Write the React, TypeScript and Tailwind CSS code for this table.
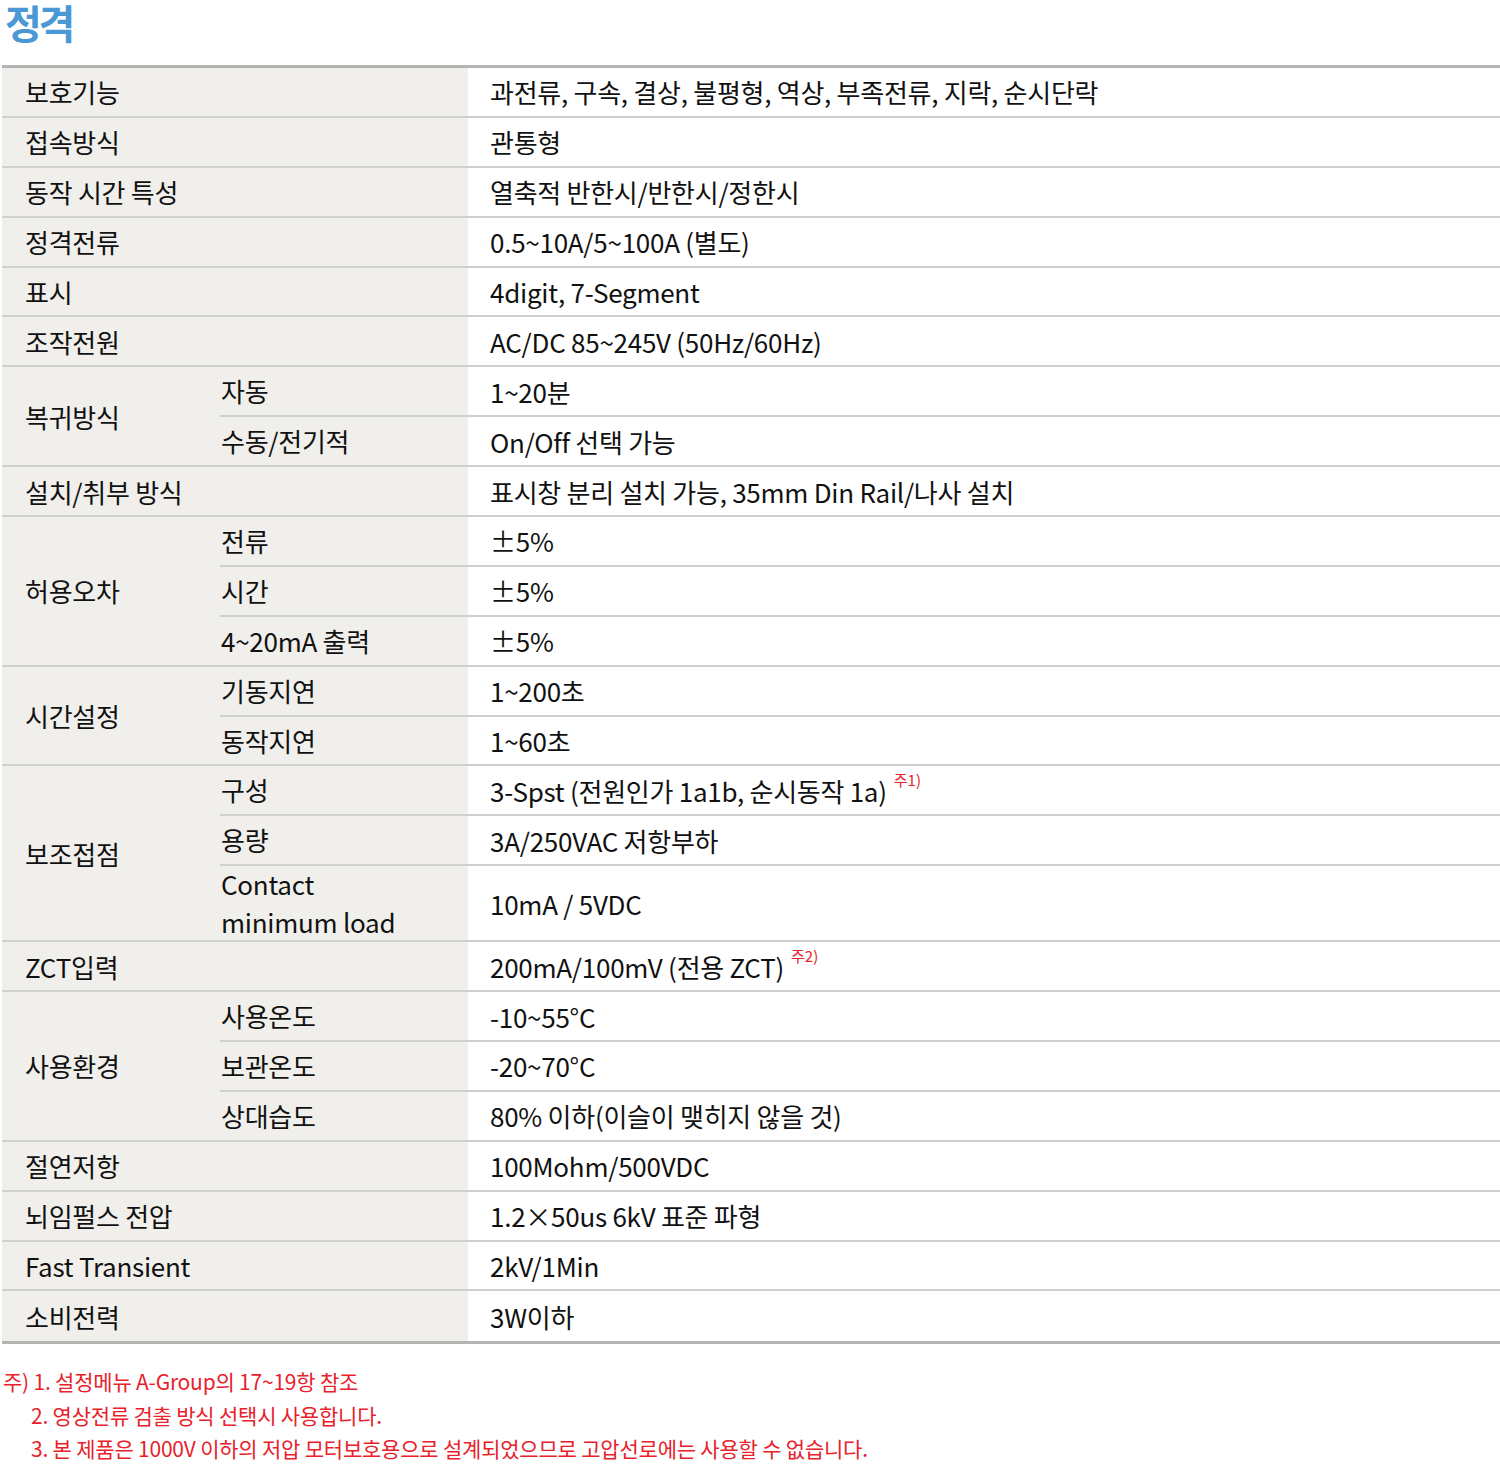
import React from "react"

type Sub = { label: React.ReactNode; value: React.ReactNode; tall?: boolean }
type Row = { label: string; value?: React.ReactNode; subs?: Sub[] }

const Note = ({ n }: { n: string }) => (
  <sup className="relative -top-[10px] ml-[7px] align-top text-[15px] tracking-normal text-[#e8212b]">주{n})</sup>
)

const rows: Row[] = [
  { label: "보호기능", value: "과전류, 구속, 결상, 불평형, 역상, 부족전류, 지락, 순시단락" },
  { label: "접속방식", value: "관통형" },
  { label: "동작 시간 특성", value: "열축적 반한시/반한시/정한시" },
  { label: "정격전류", value: "0.5~10A/5~100A (별도)" },
  { label: "표시", value: "4digit, 7-Segment" },
  { label: "조작전원", value: "AC/DC 85~245V (50Hz/60Hz)" },
  {
    label: "복귀방식",
    subs: [
      { label: "자동", value: "1~20분" },
      { label: "수동/전기적", value: "On/Off 선택 가능" },
    ],
  },
  { label: "설치/취부 방식", value: "표시창 분리 설치 가능, 35mm Din Rail/나사 설치" },
  {
    label: "허용오차",
    subs: [
      { label: "전류", value: "±5%" },
      { label: "시간", value: "±5%" },
      { label: "4~20mA 출력", value: "±5%" },
    ],
  },
  {
    label: "시간설정",
    subs: [
      { label: "기동지연", value: "1~200초" },
      { label: "동작지연", value: "1~60초" },
    ],
  },
  {
    label: "보조접점",
    subs: [
      {
        label: "구성",
        value: (
          <>
            3-Spst (전원인가 1a1b, 순시동작 1a)
            <Note n="1" />
          </>
        ),
      },
      { label: "용량", value: "3A/250VAC 저항부하" },
      {
        label: (
          <>
            Contact
            <br />
            minimum load
          </>
        ),
        value: "10mA / 5VDC",
        tall: true,
      },
    ],
  },
  {
    label: "ZCT입력",
    value: (
      <>
        200mA/100mV (전용 ZCT)
        <Note n="2" />
      </>
    ),
  },
  {
    label: "사용환경",
    subs: [
      { label: "사용온도", value: "-10~55°C" },
      { label: "보관온도", value: "-20~70°C" },
      { label: "상대습도", value: "80% 이하(이슬이 맺히지 않을 것)" },
    ],
  },
  { label: "절연저항", value: "100Mohm/500VDC" },
  { label: "뇌임펄스 전압", value: "1.2×50us 6kV 표준 파형" },
  { label: "Fast Transient", value: "2kV/1Min" },
  { label: "소비전력", value: "3W이하" },
]

function SpecRow({ row, last }: { row: Row; last: boolean }) {
  const line = last ? "" : "border-b-2 border-[#d0d0d0]"
  if (!row.subs) {
    return (
      <div className={`flex h-[49.9px] ${line}`}>
        <div className="flex w-[466px] items-center bg-[#f0efeb] pl-[23px]">{row.label}</div>
        <div className="flex flex-1 items-center pl-[22px]">{row.value}</div>
      </div>
    )
  }
  const n = row.subs.length
  return (
    <div className={`flex ${line}`}>
      <div className="flex w-[218px] items-center bg-[#f0efeb] pl-[23px]">{row.label}</div>
      <div className="flex flex-1 flex-col">
        {row.subs.map((s, i) => {
          const isLast = i === n - 1
          const h = s.tall ? "h-[74px]" : isLast ? "h-[47.9px]" : "h-[49.9px]"
          return (
            <div key={i} className={`flex ${h} ${isLast ? "" : "border-b-2 border-[#d0d0d0]"}`}>
              <div className="flex w-[248px] items-center bg-[#f0efeb] pl-[1px] leading-[38px]">{s.label}</div>
              <div className="flex flex-1 items-center pl-[22px]">{s.value}</div>
            </div>
          )
        })}
      </div>
    </div>
  )
}

export default function App() {
  return (
    <div
      className="w-[1500px] bg-white text-[#111]"
      style={{ fontFamily: '"Noto Sans CJK KR", "Noto Sans", sans-serif' }}
    >
      <h1 className="h-[65px] pl-[5px] text-[40px] font-bold leading-[44px] tracking-[-0.08em] text-[#4a98d6]">
        정격
      </h1>

      <div className="ml-[2px] border-y-[3px] border-[#b4b4b4] text-[26px] tracking-[-0.01em]">
        {rows.map((r, i) => (
          <SpecRow key={i} row={r} last={i === rows.length - 1} />
        ))}
      </div>

      <div className="mt-[21px] text-[21px] leading-[33.5px] tracking-[-0.01em] text-[#e8212b]">
        <p className="pl-[3px]">주) 1. 설정메뉴 A-Group의 17~19항 참조</p>
        <p className="pl-[31px]">2. 영상전류 검출 방식 선택시 사용합니다.</p>
        <p className="pl-[31px]">3. 본 제품은 1000V 이하의 저압 모터보호용으로 설계되었으므로 고압선로에는 사용할 수 없습니다.</p>
      </div>
    </div>
  )
}
